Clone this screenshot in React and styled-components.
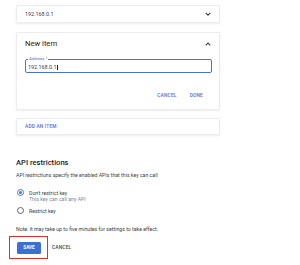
import React from "react";
import styled, { createGlobalStyle } from "styled-components";

const Global = createGlobalStyle`
  html, body { margin: 0; padding: 0; background: #fff; }
  body { font-family: Roboto, "Liberation Sans", Arial, sans-serif; color: #202124; }
`;

const Page = styled.div`
  width: 300px;
  height: 265px;
  overflow: hidden;
  padding: 5px 0 0 16px;
  box-sizing: border-box;
`;

const Column = styled.div`
  width: 204px;
  display: flex;
  flex-direction: column;
`;

const Card = styled.div`
  border: 1px solid #ececec;
  border-radius: 1px;
  box-shadow: 0 1px 2px rgba(0, 0, 0, 0.08);
  box-sizing: border-box;
  display: flex;
  flex-direction: column;
  margin-top: ${(p) => p.$gap || 0}px;
  height: ${(p) => p.$h}px;
`;

const Row = styled.div`
  display: flex;
  align-items: center;
  justify-content: space-between;
  height: ${(p) => p.$h}px;
  padding: 0 8px 0 8px;
  flex-shrink: 0;
`;

const Value = styled.span`
  font-size: 5.4px;
  color: #3c4043;
`;

const Title = styled.span`
  font-size: 7.6px;
  color: #202124;
`;

const Field = styled.div`
  position: relative;
  margin: 5px 7px 0 8px;
  height: 14px;
  border: 1.5px solid #4a72d6;
  border-radius: 2px;
  box-sizing: border-box;
  display: flex;
  align-items: center;
  padding: 2px 0 0 2px;
`;

const FloatLabel = styled.span`
  position: absolute;
  top: -3px;
  left: 2px;
  font-size: 4.2px;
  line-height: 4px;
  padding: 0 1px;
  background: #fff;
  color: #4a72d6;
`;

const Caret = styled.span`
  display: inline-block;
  width: 0.6px;
  height: 5px;
  background: #202124;
  margin-left: 0.5px;
`;

const Actions = styled.div`
  display: flex;
  justify-content: flex-end;
  gap: 13px;
  margin-top: 20px;
  padding-right: 16px;
`;

const TextButton = styled.span`
  font-size: 4.8px;
  font-weight: 500;
  letter-spacing: 0.2px;
  color: ${(p) => p.$muted ? "#3c4043" : "#4a6fd3"};
  text-transform: uppercase;
`;

const Heading = styled.div`
  font-size: 7.6px;
  font-weight: 500;
  margin-top: 23px;
  line-height: 9px;
`;

const Text = styled.div`
  font-size: 5.2px;
  line-height: 6px;
  color: ${(p) => p.$light ? "#80868b" : "#3c4043"};
  margin-top: ${(p) => p.$gap || 0}px;
  padding-left: ${(p) => p.$indent || 0}px;
`;

const Radio = styled.div`
  display: flex;
  align-items: center;
  gap: 5px;
  margin-top: ${(p) => p.$gap || 0}px;
  padding-left: 1px;
`;

const Dot = styled.span`
  width: 7px;
  height: 7px;
  border-radius: 50%;
  box-sizing: border-box;
  border: 1px solid ${(p) => p.$on ? "#4a72d6" : "#5f6368"};
  display: flex;
  align-items: center;
  justify-content: center;
  &::after {
    content: "";
    width: 3px;
    height: 3px;
    border-radius: 50%;
    background: ${(p) => p.$on ? "#4a72d6" : "transparent"};
  }
`;

const Footer = styled.div`
  display: flex;
  align-items: center;
  gap: 4px;
  margin-top: 4px;
  margin-left: -7px;
`;

const Highlight = styled.div`
  border: 1.5px solid #e0302c;
  padding: 4px 6px 4px 7px;
  width: 39px;
  height: 23px;
  box-sizing: border-box;
  display: flex;
  align-items: center;
`;

const SaveButton = styled.div`
  width: 24px;
  height: 12px;
  background: #3a6fd6;
  border-radius: 1.5px;
  color: #fff;
  font-size: 4.6px;
  font-weight: 700;
  display: flex;
  align-items: center;
  justify-content: center;
`;

const Chevron = ({ up }) => (
  <svg width="6" height="4" viewBox="0 0 6 4">
    <path
      d={up ? "M0.7 3.3 L3 1 L5.3 3.3" : "M0.7 0.8 L3 3.1 L5.3 0.8"}
      fill="none"
      stroke="#3c4043"
      strokeWidth="1.1"
    />
  </svg>
);

export default function App() {
  return (
    <>
      <Global />
      <Page>
        <Column>
          <Card $h={18}>
            <Row $h={16}>
              <Value>192.168.0.1</Value>
              <Chevron />
            </Row>
          </Card>
          <Card $h={78} $gap={9}>
            <Row $h={21}>
              <Title>New item</Title>
              <Chevron up />
            </Row>
            <Field>
              <FloatLabel>Address *</FloatLabel>
              <Value>192.168.0.1</Value>
              <Caret />
            </Field>
            <Actions>
              <TextButton>Cancel</TextButton>
              <TextButton>Done</TextButton>
            </Actions>
          </Card>
          <Card $h={17} $gap={8}>
            <Row $h={15}>
              <TextButton>Add an item</TextButton>
            </Row>
          </Card>
        </Column>
        <Heading>API restrictions</Heading>
        <Text $gap={5}>API restrictions specify the enabled APIs that this key can call</Text>
        <Radio $gap={11}>
          <Dot $on />
          <Text>Don't restrict key</Text>
        </Radio>
        <Text $light $indent={13}>This key can call any API</Text>
        <Radio $gap={5}>
          <Dot />
          <Text>Restrict key</Text>
        </Radio>
        <Text $gap={12}>Note: It may take up to five minutes for settings to take effect.</Text>
        <Footer>
          <Highlight>
            <SaveButton>SAVE</SaveButton>
          </Highlight>
          <TextButton $muted>Cancel</TextButton>
        </Footer>
      </Page>
    </>
  );
}
